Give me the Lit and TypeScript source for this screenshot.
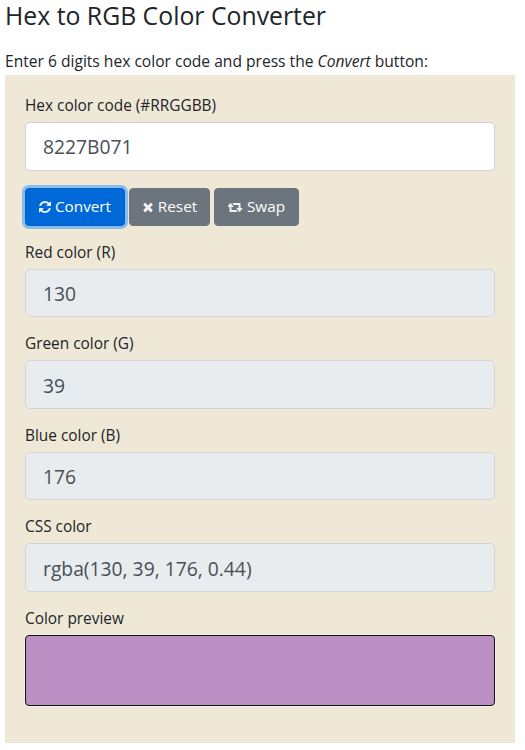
import { LitElement, html, css } from "lit";
import { customElement } from "lit/decorators.js";

const refresh = html`<svg class="ic" viewBox="128 128 1536 1536"><path d="M1639 1056q0 5-1 7-64 268-268 434.5t-478 166.5q-146 0-282.5-55t-243.5-157l-129 129q-19 19-45 19t-45-19-19-45v-448q0-26 19-45t45-19h448q26 0 45 19t19 45-19 45l-137 137q71 66 161 102t187 36q134 0 250-65t186-179q11-17 53-117 8-23 30-23h192q13 0 22.5 9.5t9.5 22.5zm25-800v448q0 26-19 45t-45 19h-448q-26 0-45-19t-19-45 19-45l138-138q-148-137-349-137-134 0-250 65t-186 179q-11 17-53 117-8 23-30 23h-199q-13 0-22.5-9.5t-9.5-22.5v-7q65-268 270-434.5t480-166.5q146 0 284 55.5t245 156.5l130-129q19-19 45-19t45 19 19 45z"/></svg>`;
const times = html`<svg class="ic" viewBox="128 128 1536 1536"><path d="M1490 1322q0 40-28 68l-136 136q-28 28-68 28t-68-28l-294-294-294 294q-28 28-68 28t-68-28l-136-136q-28-28-28-68t28-68l294-294-294-294q-28-28-28-68t28-68l136-136q28-28 68-28t68 28l294 294 294-294q28-28 68-28t68 28l136 136q28 28 28 68t-28 68l-294 294 294 294q28 28 28 68z"/></svg>`;
const retweet = html`<svg class="ic wide" viewBox="0 128 1920 1536"><path d="M1216 1504q0 13-9.5 22.5t-22.5 9.5h-960q-8 0-13.5-2t-9-7-5.5-8-3-11.5-1-11.5v-600h-192q-26 0-45-19t-19-45q0-24 15-41l320-384q19-22 49-22t49 22l320 384q15 17 15 41 0 26-19 45t-45 19h-192v384h576q16 0 25 11l160 192q7 10 7 21zm640-416q0 24-15 41l-320 384q-20 23-49 23t-49-23l-320-384q-15-17-15-41 0-26 19-45t45-19h192v-384h-576q-16 0-25-12l-160-192q-7-9-7-20 0-13 9.5-22.5t22.5-9.5h960q8 0 13.5 2t9 7 5.5 8 3 11.5 1 11.5v600h192q26 0 45 19t19 45z"/></svg>`;

@customElement("app-root")
export class AppRoot extends LitElement {
  static styles = css`
    :host {
      display: block;
      width: 525px;
      height: 750px;
      background: #fff;
      color: #212529;
      font-family: "Open Sans", "Noto Sans", sans-serif;
      font-size: 15.2px;
      overflow: hidden;
    }
    .page { padding: 0 10px 0 5px; display: flex; flex-direction: column; }
    h1 { margin: 0; font-size: 24.8px; font-weight: 400; line-height: 30px; height: 49px; }
    .intro { margin: 0; line-height: 24px; height: 26px; font-size: 15.6px; white-space: nowrap; }
    .panel { background: #efe8d6; padding: 19px 20px 37px; display: flex; flex-direction: column; }
    label { display: block; line-height: 24px; height: 24px; margin-bottom: 4px; font-size: 15.4px; }
    .field {
      box-sizing: border-box;
      height: 48.5px;
      border: 1px solid #ced4da;
      border-radius: 5px;
      padding: 2px 17px 0;
      font-size: 19.3px;
      color: #495057;
      display: flex;
      align-items: center;
      background: #e9ecef;
    }
    .field.white { background: #fff; padding-top: 0; }
    .row { margin-bottom: 15px; }
    .row.first { margin-bottom: 17px; }
    .buttons { display: flex; gap: 4px; margin-bottom: 14.5px; }
    .btn {
      box-sizing: border-box;
      height: 38.5px;
      border: 1px solid #6c757d;
      border-radius: 4px;
      background: #6c757d;
      color: #fff;
      display: flex;
      align-items: center;
      justify-content: center;
      gap: 4px;
      font-size: 15.3px;
    }
    .btn span { padding-bottom: 2px; }
    .b1 { width: 100px; background: #0069d9; border-color: #0062cc; box-shadow: 0 0 0 3px rgba(38, 143, 255, 0.5); }
    .b2 { width: 81px; }
    .b3 { width: 85px; }
    .ic { width: 12px; height: 12px; fill: currentColor; flex: none; opacity: 0.9; }
    .ic.wide { width: 15px; }
    .preview {
      box-sizing: border-box;
      height: 71px;
      border: 1px solid #111;
      border-bottom-width: 1.5px;
      border-radius: 4px;
      background: #bc8fc4;
      box-shadow: 0 0 0 1px rgba(255, 255, 255, 0.35);
    }
    .row.last { margin: 0; }
  `;

  private field(label: string, value: string) {
    return html`<div class="row"><label>${label}</label><div class="field">${value}</div></div>`;
  }

  render() {
    return html`
      <div class="page">
        <h1>Hex to RGB Color Converter</h1>
        <p class="intro">Enter 6 digits hex color code and press the <em>Convert</em> button:</p>
        <div class="panel">
          <div class="row first"><label>Hex color code (#RRGGBB)</label><div class="field white">8227B071</div></div>
          <div class="buttons">
            <div class="btn b1">${refresh}<span>Convert</span></div>
            <div class="btn b2">${times}<span>Reset</span></div>
            <div class="btn b3">${retweet}<span>Swap</span></div>
          </div>
          ${this.field("Red color (R)", "130")}
          ${this.field("Green color (G)", "39")}
          ${this.field("Blue color (B)", "176")}
          ${this.field("CSS color", "rgba(130, 39, 176, 0.44)")}
          <div class="row last"><label>Color preview</label><div class="preview"></div></div>
        </div>
      </div>
    `;
  }
}
